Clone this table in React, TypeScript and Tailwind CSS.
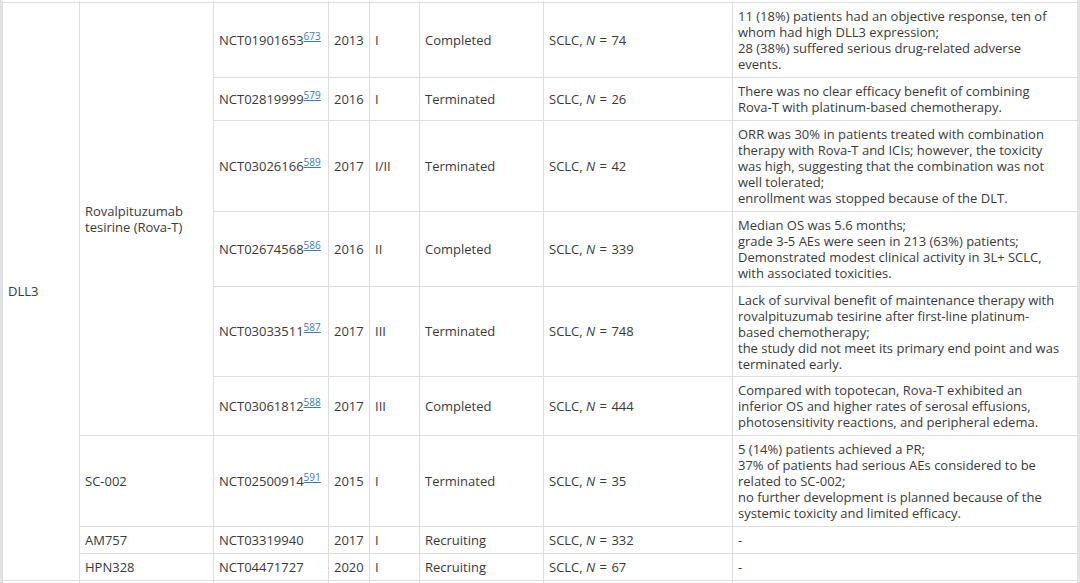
const trials = [
  {
    agent: "rova",
    nct: "NCT01901653",
    ref: "673",
    year: "2013",
    phase: "I",
    status: "Completed",
    n: "74",
    result: [
      "11 (18%) patients had an objective response, ten of",
      "whom had high DLL3 expression;",
      "28 (38%) suffered serious drug-related adverse",
      "events.",
    ],
  },
  {
    nct: "NCT02819999",
    ref: "579",
    year: "2016",
    phase: "I",
    status: "Terminated",
    n: "26",
    result: [
      "There was no clear efficacy benefit of combining",
      "Rova-T with platinum-based chemotherapy.",
    ],
  },
  {
    nct: "NCT03026166",
    ref: "589",
    year: "2017",
    phase: "I/II",
    status: "Terminated",
    n: "42",
    result: [
      "ORR was 30% in patients treated with combination",
      "therapy with Rova-T and ICIs; however, the toxicity",
      "was high, suggesting that the combination was not",
      "well tolerated;",
      "enrollment was stopped because of the DLT.",
    ],
  },
  {
    nct: "NCT02674568",
    ref: "586",
    year: "2016",
    phase: "II",
    status: "Completed",
    n: "339",
    result: [
      "Median OS was 5.6 months;",
      "grade 3-5 AEs were seen in 213 (63%) patients;",
      "Demonstrated modest clinical activity in 3L+ SCLC,",
      "with associated toxicities.",
    ],
  },
  {
    nct: "NCT03033511",
    ref: "587",
    year: "2017",
    phase: "III",
    status: "Terminated",
    n: "748",
    tight: true,
    result: [
      "Lack of survival benefit of maintenance therapy with",
      "rovalpituzumab tesirine after first-line platinum-",
      "based chemotherapy;",
      "the study did not meet its primary end point and was",
      "terminated early.",
    ],
  },
  {
    nct: "NCT03061812",
    ref: "588",
    year: "2017",
    phase: "III",
    status: "Completed",
    n: "444",
    result: [
      "Compared with topotecan, Rova-T exhibited an",
      "inferior OS and higher rates of serosal effusions,",
      "photosensitivity reactions, and peripheral edema.",
    ],
  },
  {
    agent: "SC-002",
    nct: "NCT02500914",
    ref: "591",
    year: "2015",
    phase: "I",
    status: "Terminated",
    n: "35",
    result: [
      "5 (14%) patients achieved a PR;",
      "37% of patients had serious AEs considered to be",
      "related to SC-002;",
      "no further development is planned because of the",
      "systemic toxicity and limited efficacy.",
    ],
  },
  {
    agent: "AM757",
    nct: "NCT03319940",
    year: "2017",
    phase: "I",
    status: "Recruiting",
    n: "332",
    result: ["-"],
  },
  {
    agent: "HPN328",
    nct: "NCT04471727",
    year: "2020",
    phase: "I",
    status: "Recruiting",
    n: "67",
    tight: true,
    result: ["-"],
  },
];

const td = "border border-[#dddddd] px-[5px] py-[5px] align-middle";

export default function App() {
  return (
    <div
      className="h-[583px] w-[1080px] overflow-hidden bg-white border-l-2 border-r-[3px] border-[#e2e2e2] text-[13px] leading-4 text-[#3a3a3a]"
      style={{ fontFamily: '"Open Sans", "Noto Sans", sans-serif' }}
    >
      <table className="mt-[1px] w-[1075px] table-fixed border-collapse">
        <colgroup>
          <col className="w-[77px]" />
          <col className="w-[134px]" />
          <col className="w-[115px]" />
          <col className="w-[41px]" />
          <col className="w-[50px]" />
          <col className="w-[124px]" />
          <col className="w-[189px]" />
          <col className="w-[345px]" />
        </colgroup>
        <tbody>
          {/* tail of the row above, cut off */}
          <tr className="h-[1px]">
            {Array.from({ length: 8 }).map((_, i) => (
              <td key={i} className="border-x border-[#dddddd] p-0" />
            ))}
          </tr>
          {trials.map((t, i) => (
            <tr key={t.nct}>
              {i === 0 && (
                <td rowSpan={trials.length} className={td}>
                  DLL3
                </td>
              )}
              {i === 0 && (
                <td rowSpan={6} className={td}>
                  Rovalpituzumab tesirine (Rova-T)
                </td>
              )}
              {i >= 6 && <td className={td}>{t.agent}</td>}
              <td className={`${td} whitespace-nowrap`}>
                {t.nct}
                {t.ref && (
                  <sup className="text-[10px] text-[#3b7bbf] underline">{t.ref}</sup>
                )}
              </td>
              <td className={td}>{t.year}</td>
              <td className={td}>{t.phase}</td>
              <td className={td}>{t.status}</td>
              <td className={`${td} whitespace-nowrap`}>
                SCLC, <i>N</i> <span className="mx-[1px]">=</span> {t.n}
              </td>
              <td className={`${td} whitespace-nowrap ${t.tight ? "pb-[4px]" : ""}`}>
                {t.result.map((line, k) => (
                  <div key={k}>{line}</div>
                ))}
              </td>
            </tr>
          ))}
          {/* next row, cut off by the window */}
          <tr className="h-[30px]">
            {Array.from({ length: 8 }).map((_, i) => (
              <td key={i} className={td}>
                &nbsp;
              </td>
            ))}
          </tr>
        </tbody>
      </table>
    </div>
  );
}
